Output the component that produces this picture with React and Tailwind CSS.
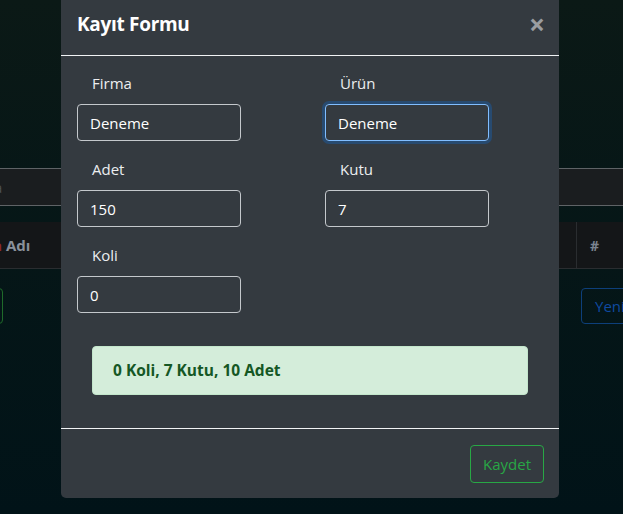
import React from "react";

const fields = [
  [
    { label: "Firma", value: "Deneme" },
    { label: "Ürün", value: "Deneme", focus: true },
  ],
  [
    { label: "Adet", value: "150" },
    { label: "Kutu", value: "7" },
  ],
  [{ label: "Koli", value: "0" }],
];

const Field = ({ label, value, focus }) => (
  <div className="w-[164px]">
    <label className="block pl-[15px] h-[31px] text-[15px] leading-[20px] text-[#eceef0]">
      {label}
    </label>
    <input
      readOnly
      value={value}
      className={
        focus
          ? "block w-[164px] h-[37px] rounded-[4px] bg-transparent border border-[#80bdff] px-3 text-[15px] text-white outline-none shadow-[0_0_0_3px_rgba(0,123,255,0.25)]"
          : "block w-[164px] h-[37px] rounded-[4px] bg-transparent border border-[#c4c8cc] px-3 text-[15px] text-white outline-none"
      }
    />
  </div>
);

export default function App() {
  return (
    <div
      className="relative w-[623px] h-[514px] overflow-hidden bg-gradient-to-b from-[#0b1916] to-[#011318]"
      style={{ fontFamily: '"Open Sans", "Noto Sans", sans-serif' }}
    >
      {/* page behind the modal */}
      <div className="pt-[168px]">
        <div className="h-[38px] border-y border-[#5f6366] bg-[#1a1d1f] flex items-center">
          <span className="text-[15px] text-[#4b5054] -ml-[6px]">a</span>
        </div>
        <div className="mt-[16px] h-[47px] bg-[#141618] border-b border-[#2a2d30] flex items-center">
          <span className="font-bold text-[15px] text-[#8a919b] -ml-[7px]">
            <span className="text-[#8b2a2a]">a</span> Adı
          </span>
          <div className="ml-auto h-full w-[47px] border-l border-[#2a2d30] flex items-center pl-[13px]">
            <span className="font-bold text-[14px] text-[#7b8390]">#</span>
          </div>
        </div>
        <div className="mt-[19px] flex justify-between">
          <div className="w-[30px] h-[36px] -ml-[27px] rounded-[4px] border border-[#1f6a2a]" />
          <div className="w-[60px] h-[36px] -mr-[18px] rounded-[4px] border border-[#0d3f7a] flex items-center pl-[13px] text-[15px] text-[#0f4aa0]">
            Yeni
          </div>
        </div>
      </div>

      {/* modal */}
      <div className="absolute left-[61px] top-0 w-[498px] h-[498px] bg-[#343a40] rounded-b-[5px] flex flex-col">
        <div className="h-[56px] border-b border-[#f1f3f5] flex items-start justify-between px-[16px] pt-[10px]">
          <h5 className="text-[19px] font-bold text-white leading-[28px] tracking-[-0.3px]">Kayıt Formu</h5>
          <span className="text-[28px] font-bold text-[#9a9da1] leading-[28px] -mr-[2px]">×</span>
        </div>
        <div className="px-[16px] pt-[17px] flex-1">
          <div className="flex flex-col gap-[18px]">
            {fields.map((row, i) => (
              <div key={i} className="flex gap-[84px]">
                {row.map((f) => (
                  <Field key={f.label} {...f} />
                ))}
              </div>
            ))}
          </div>
          <div className="mt-[33px] mx-[15px] h-[49px] rounded-[4px] bg-[#d4edda] border border-[#c3e6cb] flex items-center pl-[20px]">
            <span className="font-bold text-[15.5px] text-[#155724]">0 Koli, 7 Kutu, 10 Adet</span>
          </div>
        </div>
        <div className="h-[70px] border-t border-[#f1f3f5] flex justify-end items-start pt-[16px] pr-[15px]">
          <button className="h-[38px] px-[12px] rounded-[4px] border border-[#28a745] text-[15px] text-[#28a745]">
            Kaydet
          </button>
        </div>
      </div>
    </div>
  );
}
